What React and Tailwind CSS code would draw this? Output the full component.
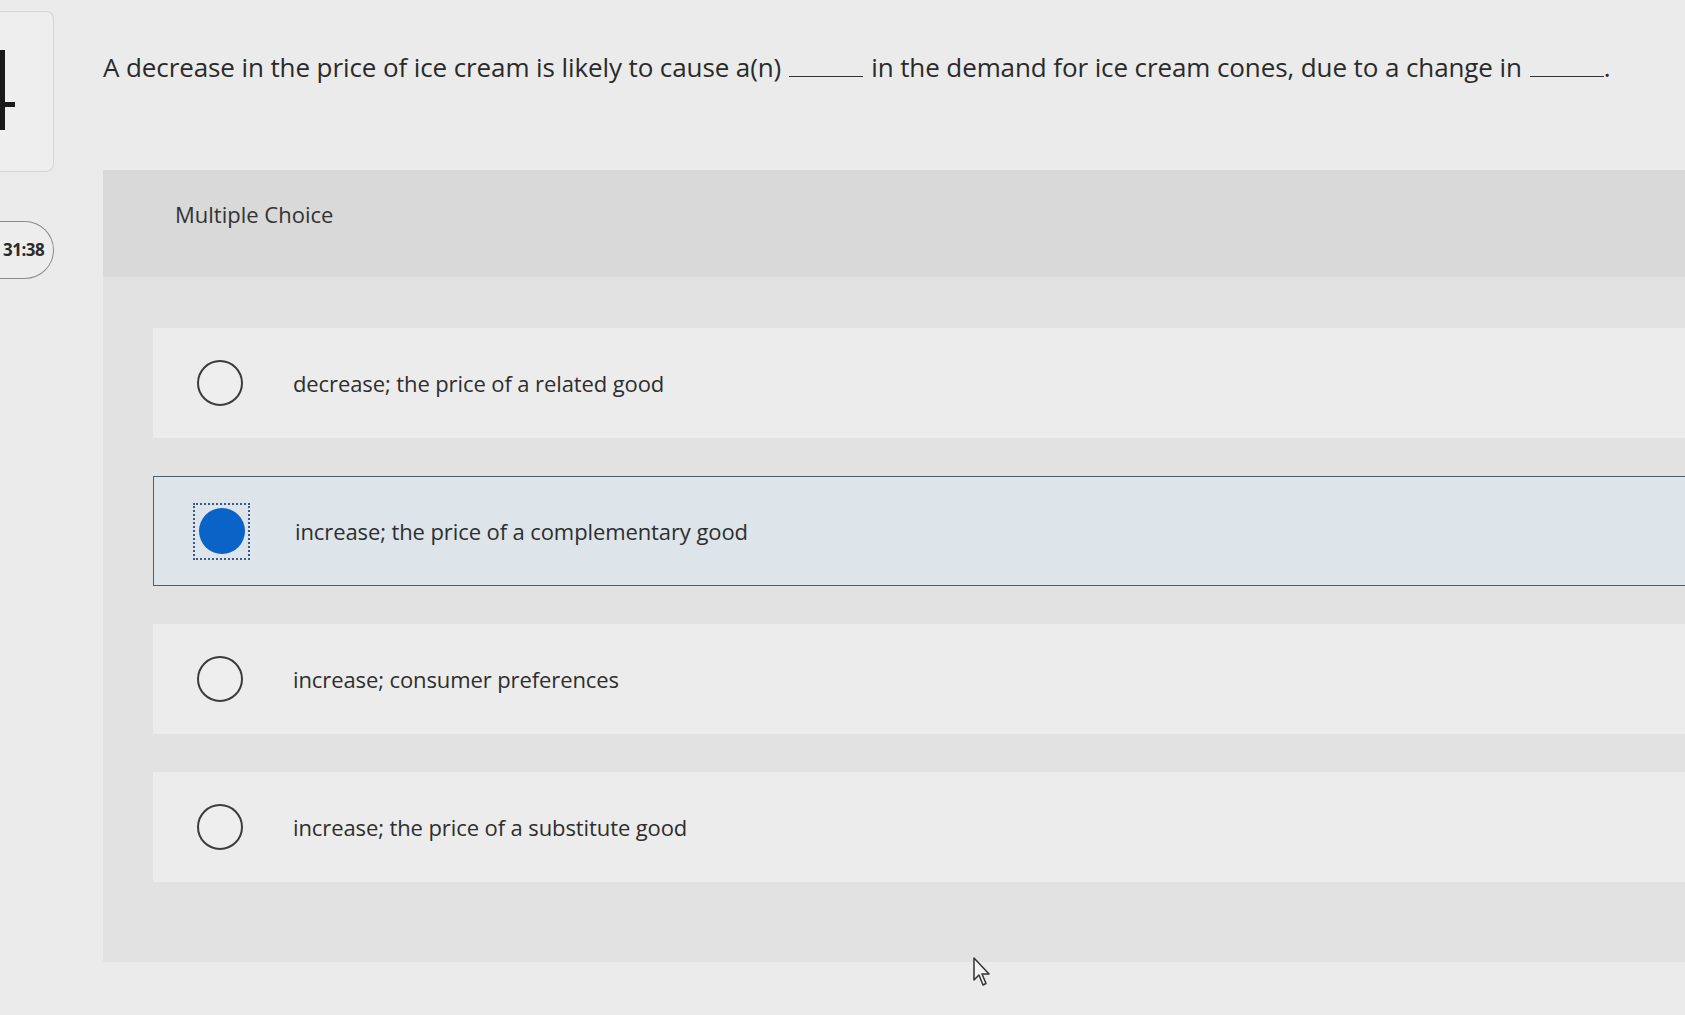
import React from "react";

function Radio({ selected }) {
  if (selected) {
    return (
      <div className="w-[57px] h-[57px] shrink-0 border-2 border-dotted border-[#3a5a8c] flex items-center justify-center -ml-[5px] mr-[-5px]">
        <div className="w-[46px] h-[46px] rounded-full bg-[#0a63c6]" />
      </div>
    );
  }
  return <div className="w-[46px] h-[46px] shrink-0 rounded-full border-2 border-[#3c3c3c] bg-[#eeeeee]" />;
}

function Option({ text, selected }) {
  return (
    <div
      className={
        "h-[110px] flex items-center pl-[44px] " +
        (selected ? "bg-[#dde5eb] border border-[#4f5e69] border-r-0" : "bg-[#ececec]")
      }
    >
      <Radio selected={selected} />
      <span className="ml-[50px] text-[22px] text-[#2e2e2e] tracking-[-0.1px]">{text}</span>
    </div>
  );
}

export default function App() {
  const options = [
    { text: "decrease; the price of a related good" },
    { text: "increase; the price of a complementary good", selected: true },
    { text: "increase; consumer preferences" },
    { text: "increase; the price of a substitute good" },
  ];
  return (
    <div className="w-[1685px] h-[1015px] bg-[#ebebeb] flex overflow-hidden relative font-['Open_Sans',sans-serif]">
      <div className="w-[54px] shrink-0 flex flex-col">
        <div className="mt-[11px] h-[161px] w-[54px] bg-[#eeeeee] border border-l-0 border-[#d4d4d4] rounded-r-[8px] relative">
          <div className="absolute left-0 top-[38px] w-[5px] h-[80px] bg-[#1a1a1a]" />
          <div className="absolute left-0 top-[90px] w-[15px] h-[5px] bg-[#1a1a1a]" />
        </div>
        <div className="mt-[49px] h-[58px] w-[54px] border border-l-0 border-[#8a8a8a] rounded-r-full bg-[#ededed] flex items-center pl-[3px]">
          <span className="text-[17px] font-bold text-[#2a2a2a] tracking-[-0.5px]">31:38</span>
        </div>
      </div>
      <div className="flex-1 pl-[49px] flex flex-col">
        <div className="h-[170px] pt-[48px] text-[26px] text-[#2a2a2a] whitespace-nowrap tracking-[-0.1px]">
          A decrease in the price of ice cream is likely to cause a(n)
          <span className="inline-block w-[74px] h-[1px] bg-[#333] mx-[8px] align-baseline" />
          in the demand for ice cream cones, due to a change in
          <span className="inline-block w-[74px] h-[1px] bg-[#333] ml-[8px] align-baseline" />.
        </div>
        <div className="h-[792px] bg-[#e2e2e2] flex flex-col">
          <div className="h-[107px] bg-[#d9d9d9] pl-[72px] pt-[28px] text-[22px] text-[#333]">Multiple Choice</div>
          <div className="pl-[50px] pt-[51px] flex flex-col gap-[38px]">
            {options.map((o, i) => (
              <Option key={i} text={o.text} selected={o.selected} />
            ))}
          </div>
        </div>
      </div>
      <svg className="absolute left-[972px] top-[956px]" width="22" height="32" viewBox="0 0 22 32">
        <path d="M2 2 L2 24 L7 19 L11 29 L14 27.5 L10 18 L17 18 Z" fill="#f4f4f4" stroke="#333" strokeWidth="1.5" strokeLinejoin="round" />
      </svg>
    </div>
  );
}
